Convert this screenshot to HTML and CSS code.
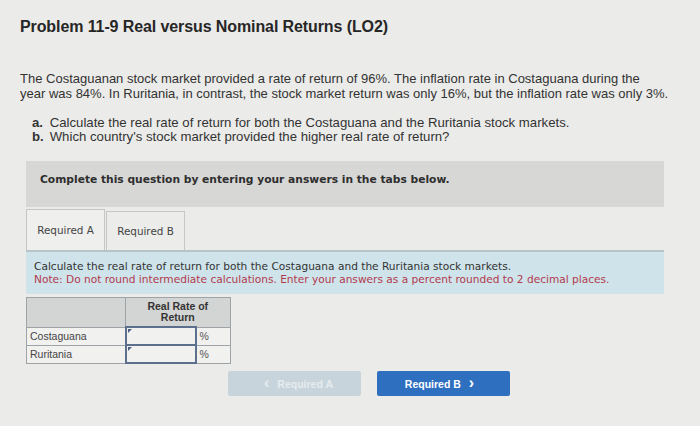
FILE: index.html
```html
<!DOCTYPE html>
<html>
<head>
<meta charset="utf-8">
<link rel="stylesheet" href="styles.css">
</head>
<body>
<div class="page">
  <h1 class="title">Problem 11-9 Real versus Nominal Returns (LO2)</h1>
  <p class="intro">The Costaguanan stock market provided a rate of return of 96%. The inflation rate in Costaguana during the<br>year was 84%. In Ruritania, in contrast, the stock market return was only 16%, but the inflation rate was only 3%.</p>
  <ol class="tasks">
    <li><span class="mark">a.</span> Calculate the real rate of return for both the Costaguana and the Ruritania stock markets.</li>
    <li><span class="mark">b.</span> Which country's stock market provided the higher real rate of return?</li>
  </ol>
  <div class="panel">
    <div class="banner">Complete this question by entering your answers in the tabs below.</div>
    <div class="tabs">
      <div class="tab active">Required A</div>
      <div class="tab">Required B</div>
    </div>
    <div class="instr">
      <div>Calculate the real rate of return for both the Costaguana and the Ruritania stock markets.</div>
      <div class="note">Note: Do not round intermediate calculations. Enter your answers as a percent rounded to 2 decimal places.</div>
    </div>
    <table class="grid">
      <tr class="head"><th class="blank"></th><th colspan="2">Real Rate of<br>Return</th></tr>
      <tr><td class="label">Costaguana</td><td class="inp"><span class="flag"></span></td><td class="pct">%</td></tr>
      <tr><td class="label">Ruritania</td><td class="inp"><span class="flag"></span></td><td class="pct">%</td></tr>
    </table>
    <div class="nav">
      <div class="btn prev"><span class="chev">&lsaquo;</span> Required A</div>
      <div class="btn next">Required B <span class="chev">&rsaquo;</span></div>
    </div>
  </div>
</div>
</body>
</html>
```
FILE: styles.css
```css
html, body { margin: 0; padding: 0; }
body { background: #ebebe9; width: 700px; height: 426px; overflow: hidden; font-family: "Liberation Sans", Arial, sans-serif; color: #2e2e2e; }
.page { padding: 17px 20px 0 20px; }
.title { font-size: 16px; line-height: 19px; font-weight: bold; margin: 0; color: #262626; letter-spacing: -0.1px; }
.intro { font-size: 13px; line-height: 15px; margin: 35px 0 0 0; color: #333; width: 660px; }
.tasks { list-style: none; margin: 15px 0 0 0; padding: 0 0 0 12px; font-size: 13.2px; line-height: 14px; color: #333; }
.mark { font-weight: bold; display: inline-block; width: 14px; }
.panel { margin-left: 6px; margin-top: 17px; width: 638px; }
.banner { background: #d7d7d6; height: 46px; box-sizing: border-box; padding: 12px 14px; font-family: "DejaVu Sans", Verdana, sans-serif; font-weight: bold; font-size: 10.7px; color: #2e2e2e; }
.tabs { display: flex; margin-top: 1px; height: 42px; align-items: flex-end; border-bottom: 2px solid #b9c2c6; }
.tab { width: 79px; height: 39px; box-sizing: border-box; border: 1px solid #c6c6c6; border-bottom: none; background: #ececea; font-family: "DejaVu Sans", Verdana, sans-serif; font-size: 10.4px; color: #444; display: flex; align-items: center; justify-content: center; }
.tab.active { height: 41px; background: #efefed; }
.tab + .tab { margin-left: 1px; }
.instr { background: #cfe3ea; height: 42px; box-sizing: border-box; padding: 8px 8px; font-family: "DejaVu Sans", Verdana, sans-serif; font-size: 10.6px; line-height: 13px; color: #333; }
.note { color: #b23a4e; }
.grid { border-collapse: collapse; margin-top: 3px; font-size: 10.5px; }
.grid td, .grid th { border: 1px solid #9ea3a8; padding: 0; }
.grid .head th { background: #d3d4d4; height: 28px; font-weight: bold; font-size: 10.5px; line-height: 11px; color: #333; }
.grid .blank { width: 98px; }
.grid td { height: 16px; background: #f1f1f0; }
.label { padding-left: 3px !important; color: #444; }
.inp { width: 68px; border: 2px solid #5c6f8c !important; position: relative; }
.flag { position: absolute; left: 1px; top: 1px; width: 0; height: 0; border-left: 4px solid #4a5f80; border-bottom: 4px solid transparent; }
.pct { width: 30px; padding-left: 3px !important; color: #555; }
.nav { display: flex; gap: 16px; margin: 7px 0 0 202px; }
.btn { width: 133px; height: 25px; box-sizing: border-box; display: flex; align-items: center; justify-content: center; font-size: 10.5px; font-weight: bold; border-radius: 2px; }
.prev { background: #c8d4dc; color: #e6ecef; }
.next { background: #2f6fbf; color: #fff; }
.chev { font-size: 16px; margin: 0 8px; position: relative; top: -1px; }
```
